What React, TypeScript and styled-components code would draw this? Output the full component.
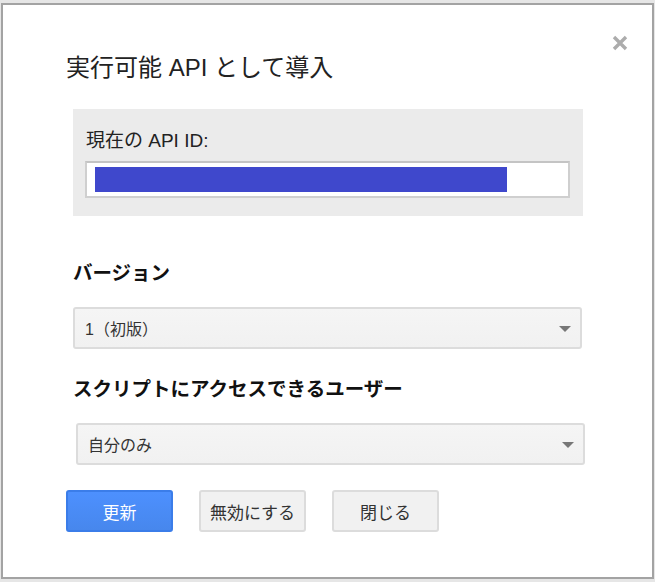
import React from "react";
import styled, { createGlobalStyle } from "styled-components";

const GlobalStyle = createGlobalStyle`
  html, body {
    margin: 0;
    padding: 0;
    background: #e6e6e6;
  }
  body {
    font-family: "Liberation Sans", "Noto Sans CJK JP", sans-serif;
    color: #222;
  }
`;

const Dialog = styled.div`
  position: relative;
  box-sizing: border-box;
  width: 653px;
  height: 576px;
  margin: 3px 0 0 1px;
  background: #fff;
  border: 2px solid #a3a3a3;
  padding: 49px 0 0 63px;
  display: flex;
  flex-direction: column;
  align-items: flex-start;
`;

const CloseButton = styled.button`
  position: absolute;
  top: 28px;
  right: 23px;
  width: 19px;
  height: 19px;
  padding: 0;
  border: none;
  background: none;
  display: flex;
  align-items: center;
  justify-content: center;
`;

const Title = styled.h2`
  margin: 0;
  font-size: 24px;
  line-height: 28px;
  font-weight: normal;
  color: #222;
`;

const IdPanel = styled.div`
  box-sizing: border-box;
  width: 510px;
  margin: 27px 0 0 7px;
  padding: 21px 13px 18px 12px;
  background: #ebebeb;
  display: flex;
  flex-direction: column;
`;

const IdLabel = styled.div`
  font-size: 19px;
  line-height: 22px;
  margin-left: 1px;
  color: #222;
`;

const IdField = styled.div`
  box-sizing: border-box;
  height: 37px;
  margin-top: 9px;
  padding: 4px 8px;
  background: #fff;
  border: 2px solid #cfcfcf;
  border-top-color: #c4c4c4;
`;

const Redaction = styled.div`
  width: 412px;
  height: 25px;
  background: #3f48cc;
`;

const SectionHeading = styled.h3<{ $gap: number }>`
  margin: ${(p) => p.$gap}px 0 0 7px;
  font-size: 19.5px;
  line-height: 26px;
  font-weight: bold;
  color: #111;
`;

const Select = styled.div<{ $indent: number }>`
  box-sizing: border-box;
  width: 509px;
  height: 42px;
  margin: 21px 0 0 ${(p) => p.$indent}px;
  padding: 0 9px 0 10px;
  background: linear-gradient(#f5f5f5, #f1f1f1);
  border: 2px solid #dcdcdc;
  border-radius: 3px;
  display: flex;
  align-items: center;
  justify-content: space-between;
  font-size: 16px;
  color: #333;
`;

const Caret = styled.span`
  width: 0;
  height: 0;
  border-left: 6px solid transparent;
  border-right: 6px solid transparent;
  border-top: 6px solid #777;
  margin-top: 2px;
`;

const ButtonRow = styled.div`
  display: flex;
  gap: 26px;
  margin-top: 25px;
`;

const Button = styled.button<{ $primary?: boolean }>`
  box-sizing: border-box;
  width: 107px;
  height: 42px;
  border-radius: 3px;
  font-family: inherit;
  font-size: 17px;
  border: 2px solid ${(p) => (p.$primary ? "#3b7de9" : "#dcdcdc")};
  background: ${(p) =>
    p.$primary ? "linear-gradient(#4d90fe, #4787ed)" : "#f1f1f1"};
  color: ${(p) => (p.$primary ? "#fff" : "#333")};
`;

const App = () => {
  return (
    <>
      <GlobalStyle />
      <Dialog>
        <CloseButton aria-label="閉じる">
          <svg width="16" height="16" viewBox="0 0 16 16">
            <path
              d="M2 2 L14 14 M14 2 L2 14"
              stroke="#acacac"
              strokeWidth="3.4"
            />
          </svg>
        </CloseButton>
        <Title>実行可能 API として導入</Title>
        <IdPanel>
          <IdLabel>現在の API ID:</IdLabel>
          <IdField>
            <Redaction />
          </IdField>
        </IdPanel>
        <SectionHeading $gap={44}>バージョン</SectionHeading>
        <Select $indent={7}>
          <span>1（初版）</span>
          <Caret />
        </Select>
        <SectionHeading $gap={27}>スクリプトにアクセスできるユーザー</SectionHeading>
        <Select $indent={10}>
          <span>自分のみ</span>
          <Caret />
        </Select>
        <ButtonRow>
          <Button $primary>更新</Button>
          <Button>無効にする</Button>
          <Button>閉じる</Button>
        </ButtonRow>
      </Dialog>
    </>
  );
};

export default App;
